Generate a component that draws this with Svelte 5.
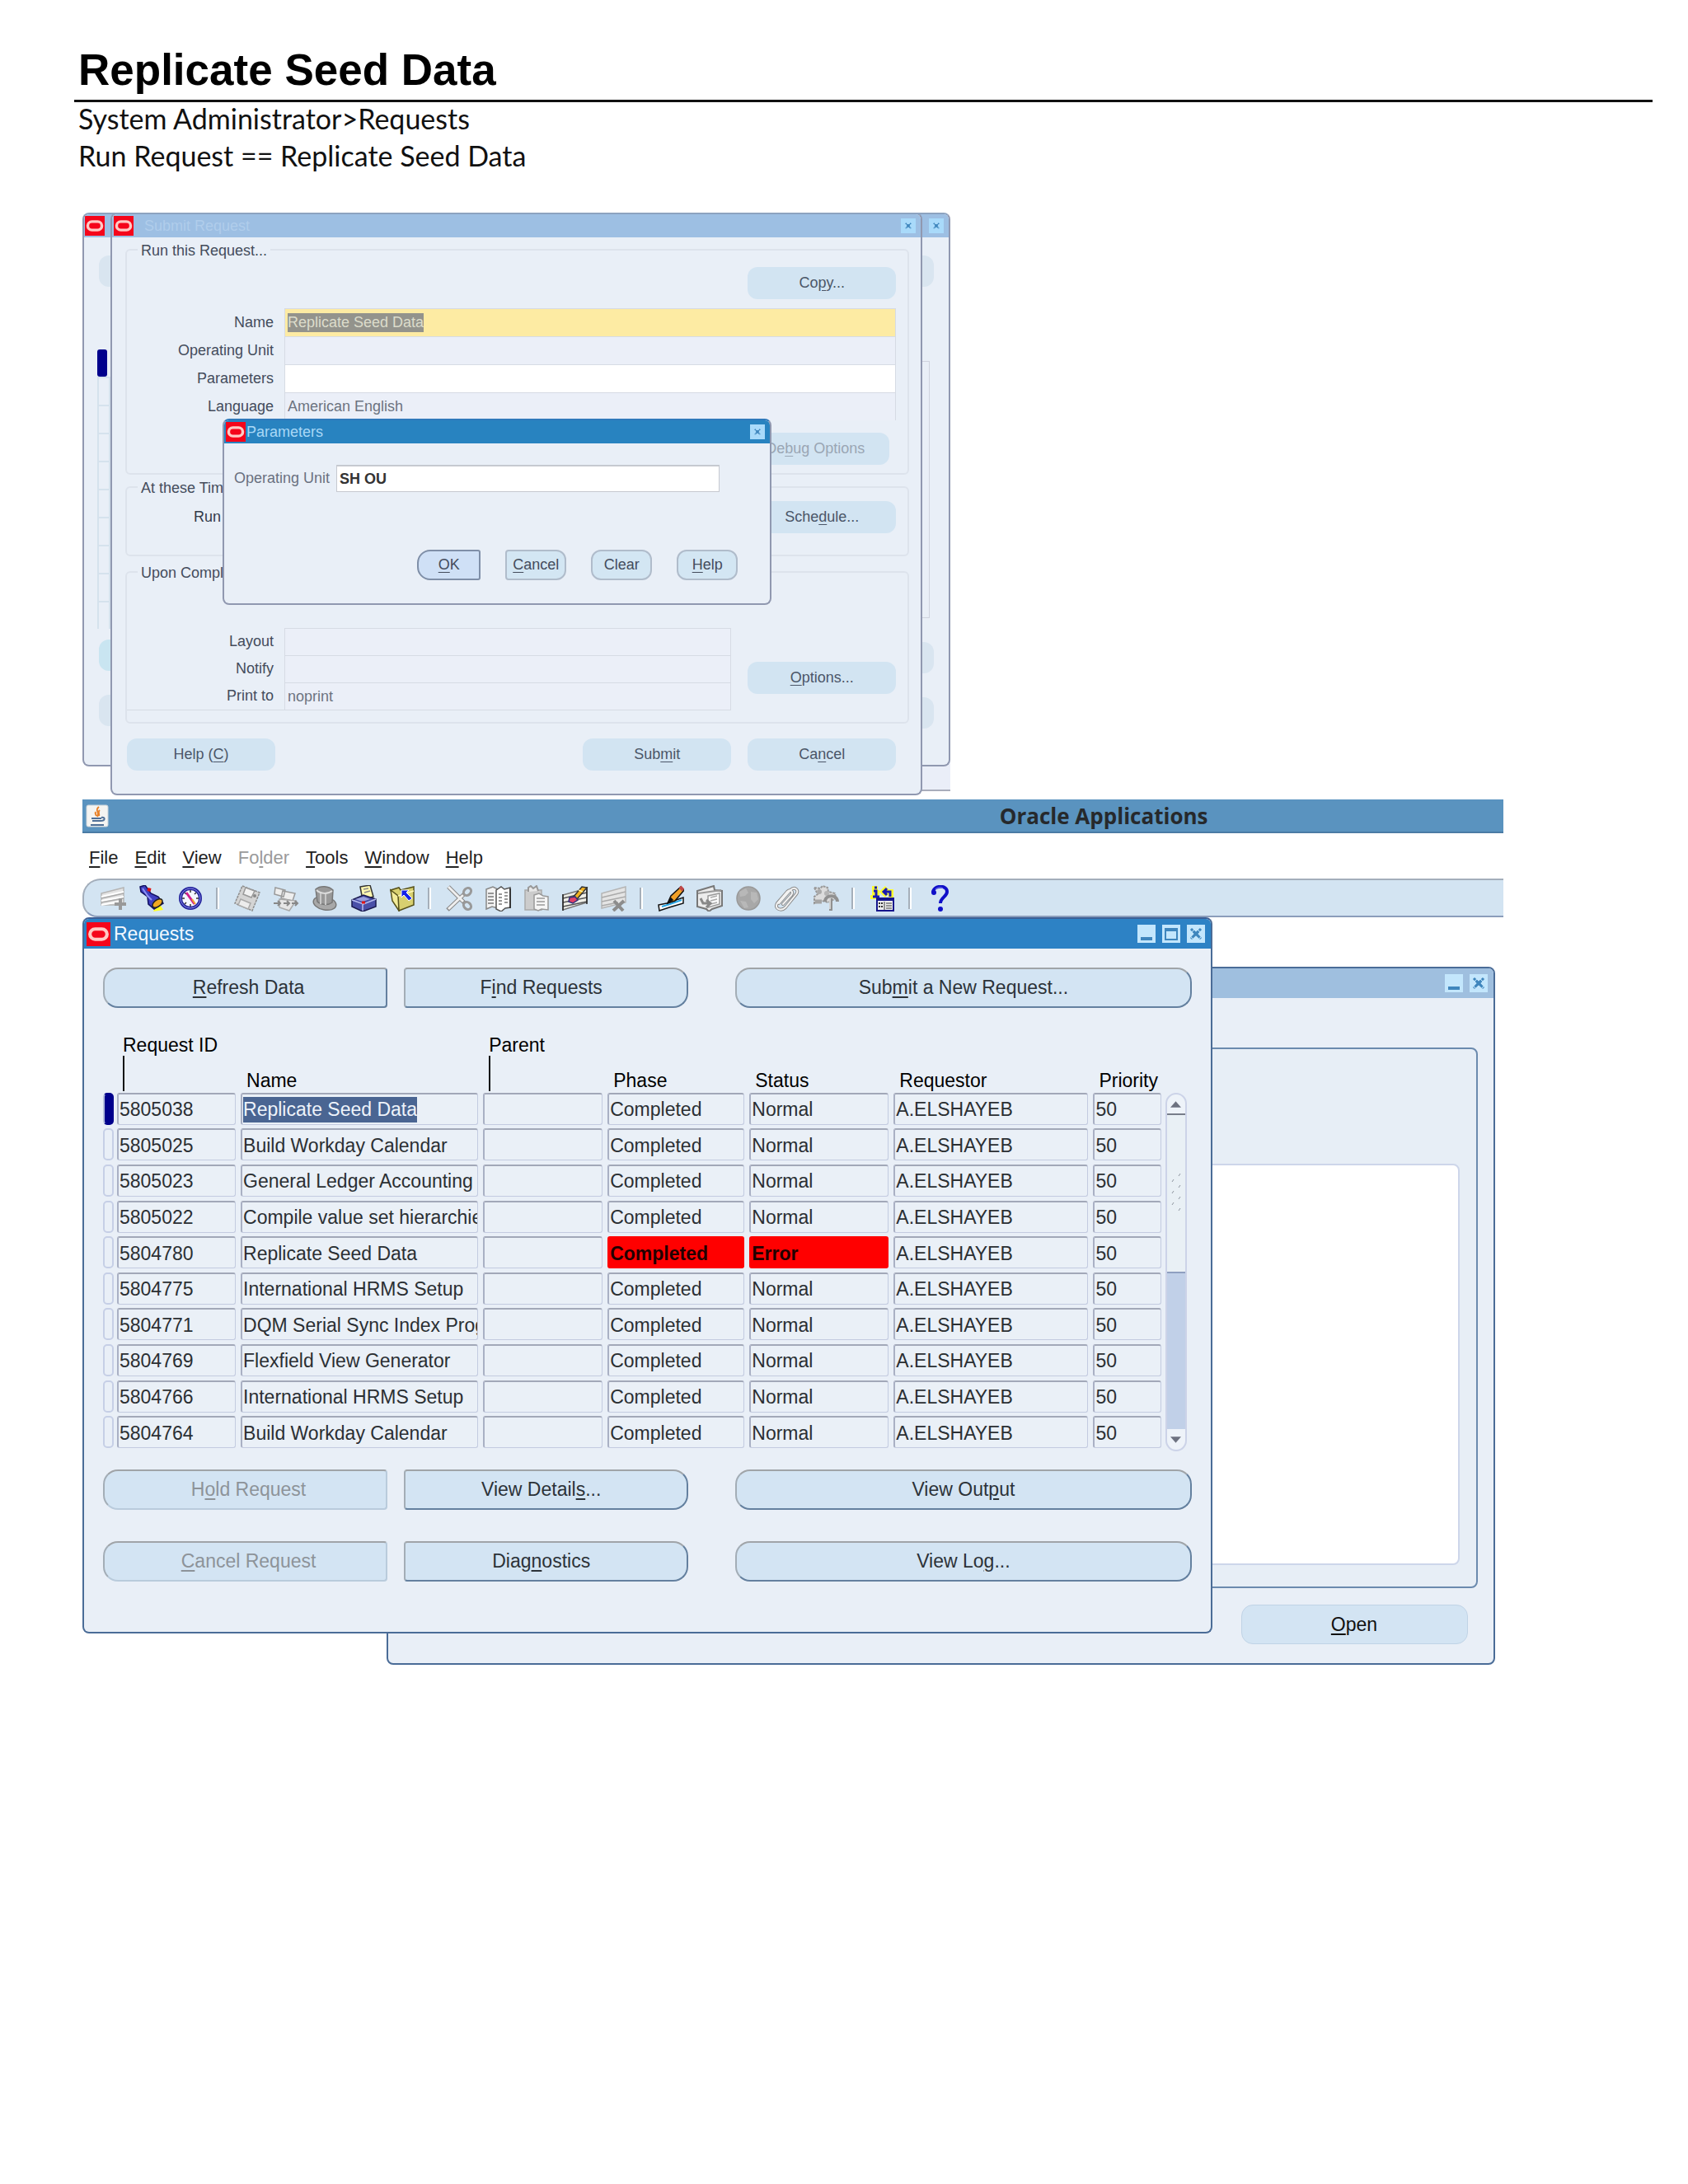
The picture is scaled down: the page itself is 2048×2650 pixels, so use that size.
<script>
  const requests = [
    ['5805038', 'Replicate Seed Data'],
    ['5805025', 'Build Workday Calendar'],
    ['5805023', 'General Ledger Accounting'],
    ['5805022', 'Compile value set hierarchies'],
    ['5804780', 'Replicate Seed Data', true],
    ['5804775', 'International HRMS Setup'],
    ['5804771', 'DQM Serial Sync Index Program'],
    ['5804769', 'Flexfield View Generator'],
    ['5804766', 'International HRMS Setup'],
    ['5804764', 'Build Workday Calendar']
  ].map(([id, name, failed = false]) => ({ id, name, failed }));

  const menus = ['_File', '_Edit', '_View', 'Fo_lder', '_Tools', '_Window', '_Help'];

  const tools = [
    'New', 'Find', 'Navigator', '|', 'Save', 'Next Step', 'Switch Responsibility', 'Print', 'Close Form', '|',
    'Cut', 'Copy', 'Paste', 'Clear Record', 'Delete', '|',
    'Edit Field', 'Zoom', 'Translations', 'Attachments', 'Folder Tools', '|', 'Window Help', '|', 'Help'
  ];
</script>

{#snippet mn(text)}
  {@const i = text.indexOf('_')}
  {#if i < 0}{text}{:else}<span>{text.slice(0, i)}<u>{text[i + 1]}</u>{text.slice(i + 2)}</span>{/if}
{/snippet}

{#snippet oracle()}
  <svg class="oracle" viewBox="0 0 28 28" aria-hidden="true">
    <rect width="28" height="28" fill="#f5051a" />
    <rect x="4" y="8" width="20" height="12" rx="6" fill="none" stroke="#ffc9c4" stroke-width="4" />
  </svg>
{/snippet}

{#snippet ctl(kind)}
  <button class="ctl" aria-label={kind}>
    <svg viewBox="0 0 22 22" fill="none" stroke="#3f86bd">
      {#if kind === 'Minimize'}<path d="M4 17h14" stroke-width="4" />
      {:else if kind === 'Maximize'}<path d="M4 5h14v13H4zM4 7h14" stroke-width="2" />
      {:else}<path d="M5 5l12 12M17 5L5 17" stroke-width="3" stroke-dasharray="3 1" /><path d="M8 8l6 6M14 8l-6 6" stroke-width="3" />{/if}
    </svg>
  </button>
{/snippet}

{#snippet toolIcon(name)}
  <svg viewBox="0 0 32 32" aria-hidden="true" fill="none" stroke-width="1.5">
    {#if name === 'New'}
      <path d="M2 10l27-7v21H2z" fill="#e4e4e4" stroke="#b5b5b5" /><path d="M2 14l27-6M2 19l27-5M2 24l22-4" stroke="#fff" stroke-width="2" /><path d="M2 16l27-6M2 21l27-5" stroke="#aaa" /><path d="M25 16v14M18 23h14" stroke="#999" stroke-width="4" />
    {:else if name === 'Find'}
      <path d="M24 20l6 10-12 2z" fill="#ffff28" /><path d="M2 2l6-2 7 10 9 4 6 8-11 7-7-6-1-9L3 8z" fill="#3f3fc0" stroke="#101060" /><path d="M5 4l6 9 5 5" stroke="#8d92f4" stroke-width="2" /><ellipse cx="23" cy="22" rx="7" ry="4" transform="rotate(-38 23 22)" fill="#f0a820" stroke="#222" /><path d="M11 5l4 1" stroke="#e01010" stroke-width="4" />
    {:else if name === 'Navigator'}
      <circle cx="16" cy="16" r="12" fill="#f4f6ff" stroke="#23239c" stroke-width="4" /><circle cx="16" cy="16" r="12" stroke="#8a8ae8" stroke-width="1" /><path d="M16 6v3M16 23v3M6 16h3M23 16h3M9 9l2 2M23 9l-2 2M9 23l2-2" stroke="#333" /><path d="M11 9l10 14" stroke="#d0208c" stroke-width="3" /><path d="M18 17l4 6" stroke="#f0a030" stroke-width="2" />
    {:else if name === 'Save'}
      <path d="M10 1l21 8-9 22-21-9z" fill="#d4d4d4" stroke="#8d8d8d" stroke-dasharray="3 1" /><path d="M14 3l11 4-4 8-10-4z" fill="#f2f2f2" stroke="#999" /><path d="M8 17l12 5-3 7-12-5z" fill="#ececec" stroke="#aaa" /><circle cx="25" cy="13" r="2" fill="#888" />
    {:else if name === 'Next Step'}
      <path d="M3 3l12 3-2 8-11-3zM12 7l15 3-3 9-14-3z" fill="#eee" stroke="#999" /><path d="M8 17l20 2-8 12-12-4z" fill="#e6e6e6" stroke="#aaa" /><path d="M1 22h8M13 22h7M23 22h7M6 19l3 3-3 3M17 19l3 3-3 3M27 19l3 3-3 3" stroke="#888" stroke-width="2" />
    {:else if name === 'Switch Responsibility'}
      <ellipse cx="16" cy="22" rx="14" ry="8" transform="rotate(12 16 22)" fill="#a8a8a8" stroke="#777" /><path d="M5 5c6-5 16-4 21 1l-1 15c-5 4-14 3-18-1z" fill="#999" stroke="#777" /><path d="M6 6c5 5 14 5 19 1" stroke="#ddd" stroke-width="2" /><path d="M11 10v13M17 11v13" stroke="#c8c8c8" stroke-width="2" />
    {:else if name === 'Print'}
      <path d="M12 2l12-2 4 14-13 4z" fill="#fff8b0" stroke="#333" /><path d="M16 5l6-1M17 9l7-2" stroke="#888" /><path d="M2 18l14-6 15 5v9l-16 6-13-6z" fill="#4a50a8" stroke="#1b1b50" /><path d="M2 18l14 5 15-6M15 23v8" stroke="#b8bdf0" /><path d="M6 17l10-3 8 3-9 3z" fill="#9aa0dd" /><path d="M14 21h4" stroke="#e01515" stroke-width="3" />
    {:else if name === 'Close Form'}
      <path d="M2 6l10-3 2 3 16-4v22L12 31z" fill="#d8d070" stroke="#55501a" /><path d="M2 6l9 7 1 18L4 19z" fill="#f3ec9a" stroke="#55501a" /><path d="M11 13l19-6" stroke="#fff8b8" /><path d="M15 6h9l-3 3 7 7-4 3-6-7-3 3z" fill="#1522e8" stroke="#fff" stroke-width="1" />
    {:else if name === 'Cut'}
      <path d="M3 2l20 20M2 30l20-19" stroke="#888" stroke-width="5" /><path d="M3 2l18 18M3 29l18-17" stroke="#efefef" stroke-width="3" /><ellipse cx="26" cy="8" rx="5" ry="4" transform="rotate(-45 26 8)" stroke="#999" stroke-width="3" /><ellipse cx="26" cy="25" rx="5" ry="4" transform="rotate(45 26 25)" stroke="#999" stroke-width="3" />
    {:else if name === 'Copy'}
      <path d="M2 5l8-3 6 3v23l-7-2-7 3z" fill="#f3f3f3" stroke="#888" /><path d="M14 6l6-4 4 3 7-2v24l-6 1-5 4-6-3z" fill="#fff" stroke="#555" /><path d="M4 10h7M4 14h7M4 18h7M4 22h7M17 11h4M24 9h4M17 15h4M24 13h4M17 19h4M24 17h4M17 23h4M24 21h4" stroke="#777" /><path d="M31 4v24" stroke="#222" />
    {:else if name === 'Paste'}
      <path d="M2 6h20v24H2z" fill="#ccc" stroke="#aaa" /><path d="M6 8V3l3-2 3 3 4-3 2 6" fill="#e8e8e8" stroke="#999" stroke-width="2" /><path d="M13 12l6-2 5 3 6 1v16l-8-1-4 2-5-2z" fill="#f6f6f6" stroke="#999" /><path d="M16 16h10M16 20h10M16 24h10" stroke="#999" />
    {:else if name === 'Clear Record'}
      <path d="M1 12l29-8v17L1 30z" fill="#efefe8" stroke="#777" /><path d="M1 16l29-7M1 21l29-6M1 26l29-6" stroke="#555" /><path d="M1 11v20M30 2v21" stroke="#222" /><path d="M13 15L24 2l6 1-12 14z" fill="#f0b020" stroke="#333" /><path d="M20 6l5 2" stroke="#fff0a0" /><path d="M9 15l7-1 3 4-6 4-5-2z" fill="#e04068" stroke="#30307a" />
    {:else if name === 'Delete'}
      <path d="M1 10l29-8v19L1 28z" fill="#e4e4e4" stroke="#b5b5b5" /><path d="M1 15l29-7M1 20l29-6M1 25l20-4" stroke="#aaa" /><path d="M16 19l11 12M28 19L15 31" stroke="#8c8c8c" stroke-width="4" />
    {:else if name === 'Edit Field'}
      <path d="M1 24l10-2 20-7v7L14 27 2 31z" fill="#fff" stroke="#111" /><path d="M5 26l10-3 14-5" stroke="#28a8e8" stroke-width="2" /><path d="M12 22l4-9L28 2l4 4-11 13z" fill="#f0a028" stroke="#111" /><path d="M27 2l4 4" stroke="#c04848" stroke-width="4" /><path d="M12 22l4-6 2 2z" fill="#111" stroke="#111" />
    {:else if name === 'Zoom'}
      <path d="M1 7l20-6 1 5 9 1v18l-12 4-4 3-3-3-11-3z" fill="#ececec" stroke="#777" stroke-width="2" /><path d="M2 10l28-4" stroke="#999" stroke-width="2" /><path d="M14 13l14-3v13l-14 4z" stroke="#999" fill="#fafafa" /><path d="M17 15l8-2M17 19l8-2M17 23l8-2" stroke="#aaa" /><path d="M5 16l3 6h8M12 18l5 4-5 5" stroke="#888" stroke-width="3" />
    {:else if name === 'Translations'}
      <circle cx="16" cy="16" r="14" fill="#a8a8a8" stroke="#999" /><path d="M5 8l8-4 3 5-4 4-6 1zM19 8l7 1 2 8-5 5-4-5zM6 19l7 1 3 7-5 1z" fill="#b8b8b8" />
    {:else if name === 'Attachments'}
      <g stroke-linecap="round"><path d="M6 22L20 6c5-5 11 0 7 5L14 27c-5 5-14 2-10-5L16 8c4-4 8 0 5 4L11 23" stroke="#8c8c8c" stroke-width="4" /><path d="M6 22L20 6c5-5 11 0 7 5L14 27c-5 5-14 2-10-5L16 8c4-4 8 0 5 4L11 23" stroke="#f2f2f2" stroke-width="2" /></g>
    {:else if name === 'Folder Tools'}
      <path d="M2 3l7 1 3-3 6 2 1 5 8 2 1 6-9 5-8-2-9 3V14l4-3z" fill="#dcdcdc" stroke="#999" stroke-dasharray="3 1" stroke-width="2" /><circle cx="8" cy="8" r="3" fill="#aaa" /><circle cx="17" cy="10" r="3" fill="#b5b5b5" /><path d="M3 20h8" stroke="#a5a5a5" stroke-width="5" /><path d="M15 20c0-9 15-9 15 0M22 16v15" stroke="#909090" stroke-width="4" /><path d="M21 16v13" stroke="#e8e8e8" />
    {:else if name === 'Window Help'}
      <path d="M3 1h7v5h2v11H1v-5h2z" fill="#ffff30" /><path d="M6 3h3M5 7h3v7M4 14h8" stroke="#1a1ab0" stroke-width="3" /><path d="M16 8h10v7M21 3l-5 5 5 5" stroke="#ffff30" stroke-width="6" /><path d="M17 8h8v6M21 4l-4 4 4 4" stroke="#1a1ab0" stroke-width="3" /><path d="M9 16h20v15H9z" fill="#eee" stroke="#15158c" stroke-width="2" /><path d="M9 17h20" stroke="#15158c" stroke-width="4" /><path d="M11 22h5M11 26h5" stroke="#333" stroke-width="2" stroke-dasharray="2 1" /><path d="M18 20v10M20 22h7M20 25h7M20 28h7" stroke="#777" />
    {:else}
      <path d="M8 9c0-9 17-10 17-1 0 6-8 7-8 14" stroke="#1010c8" stroke-width="4" /><circle cx="9" cy="9" r="3" fill="#1010c8" /><circle cx="17" cy="29" r="3" fill="#1010c8" /><path d="M11 5c3-3 8-3 10 0" stroke="#7a7af0" stroke-width="1" />
    {/if}
  </svg>
{/snippet}

<main>
  <header>
    <h1>Replicate Seed Data</h1>
    <p>System Administrator&gt;Requests</p>
    <p>Run Request == Replicate Seed Data</p>
  </header>

  <div class="submit-shot stack">
    <div class="sheet"></div>

    <div class="win soft behind">
      <div class="bar pale">{@render oracle()}{@render ctl('Close')}</div>
      <div class="edges">
        <div class="edge left">
          <i class="nub"></i><i class="current"></i>
          {#each Array(9) as _}<i class="slot"></i>{/each}
          <i class="nub teal"></i><i class="nub"></i>
        </div>
        <div class="edge right">
          <i class="nub"></i><i class="rail"></i><i class="nub"></i><i class="nub last"></i>
        </div>
      </div>
    </div>

    <section class="win soft submit">
      <div class="bar pale">{@render oracle()}<span>Submit Request</span>{@render ctl('Close')}</div>
      <div class="submit-body">
        <fieldset class="run">
          <legend>Run this Request...</legend>
          <div class="right"><button class="pill">{@render mn('Co_py...')}</button></div>
          <label class="row"><span>Name</span><div class="field yellow"><input class="picked" readonly value="Replicate Seed Data" size="19" /></div></label>
          <label class="row"><span>Operating Unit</span><input class="field" readonly /></label>
          <label class="row"><span>Parameters</span><input class="field white" /></label>
          <label class="row"><span>Language</span><input class="field" readonly value="American English" /></label>
          <div class="right debug"><button class="pill" disabled>{@render mn('De_bug Options')}</button></div>
        </fieldset>
        <fieldset class="times">
          <legend>At these Times...</legend>
          <div class="line"><span class="job">Run the Job</span><button class="pill">{@render mn('Sche_dule...')}</button></div>
        </fieldset>
        <fieldset class="upon">
          <legend>Upon Completion...</legend>
          <div class="line end">
            <div class="rows">
              <label class="row"><span>Layout</span><input class="field" readonly /></label>
              <label class="row"><span>Notify</span><input class="field" readonly /></label>
              <label class="row"><span>Print to</span><input class="field" readonly value="noprint" /></label>
            </div>
            <button class="pill options">{@render mn('_Options...')}</button>
          </div>
        </fieldset>
        <div class="actions">
          <button class="pill help">{@render mn('Help (_C)')}</button>
          <button class="pill">{@render mn('Sub_mit')}</button>
          <button class="pill">{@render mn('Ca_ncel')}</button>
        </div>
      </div>
    </section>

    <section class="win soft dialog">
      <div class="bar">{@render oracle()}<span>Parameters</span>{@render ctl('Close')}</div>
      <label class="ask"><span>Operating Unit</span><input value="SH OU" /></label>
      <div class="dialog-actions">
        <button class="ok">{@render mn('_OK')}</button>
        <button class="half">{@render mn('_Cancel')}</button>
        <button>Clear</button>
        <button>{@render mn('_Help')}</button>
      </div>
    </section>
  </div>

  <div class="app">
    <div class="app-title">
      <svg viewBox="0 0 28 28" aria-hidden="true" fill="none">
        <rect x="1" y="1" width="26" height="26" rx="2" fill="#f4f4f2" stroke="#c9d3da" />
        <path d="M16 3c-6 5 2 6-2 12M17 7c-3 2 0 4-1 7M12 9c-1 2 0 3 1 5" stroke="#e8822a" stroke-width="2" />
        <path d="M7 17h12M8 20h10M6 25h16M19 16c5-1 5 4-1 4" stroke="#4e6f97" stroke-width="2" />
      </svg>
      <span>Oracle Applications</span>
    </div>
    <nav>
      {#each menus as m}<button disabled={m === 'Fo_lder'}>{@render mn(m)}</button>{/each}
    </nav>
    <div class="toolbar">
      {#each tools as t}
        {#if t === '|'}<i></i>{:else}<button aria-label={t}>{@render toolIcon(t)}</button>{/if}
      {/each}
    </div>

    <div class="stack">
      <section class="win navigator">
        <div class="bar pale">{@render ctl('Minimize')}{@render ctl('Close')}</div>
        <div class="panel"><div class="list"></div></div>
        <button class="open">{@render mn('_Open')}</button>
      </section>

      <section class="win requests">
        <div class="bar">{@render oracle()}<span>Requests</span>{@render ctl('Minimize')}{@render ctl('Maximize')}{@render ctl('Close')}</div>
        <div class="requests-body">
          <div class="buttons">
            <button class="l">{@render mn('_Refresh Data')}</button>
            <button class="r">{@render mn('F_ind Requests')}</button>
            <button class="wide">{@render mn('Sub_mit a New Request...')}</button>
          </div>
          <div class="grid">
            <table>
              <colgroup>
                <col class="c0" /><col class="c1" /><col class="c2" /><col class="c3" /><col class="c4" /><col class="c5" /><col class="c6" /><col class="c7" />
              </colgroup>
              <thead>
                <tr>
                  <td></td>
                  <th class="tick">Request ID</th><th>Name</th><th class="tick">Parent</th><th>Phase</th><th>Status</th><th>Requestor</th><th>Priority</th>
                </tr>
              </thead>
              <tbody>
                {#each requests as r, i}
                  <tr>
                    <td class="mark"><i class:on={i === 0}></i></td>
                    <td><div><input readonly aria-label="Request ID" value={r.id} /></div></td>
                    <td><div><input readonly aria-label="Name" class:picked={i === 0} value={r.name} /></div></td>
                    <td><div><input readonly aria-label="Parent" /></div></td>
                    <td><div class:failed={r.failed}><input readonly aria-label="Phase" value="Completed" /></div></td>
                    <td><div class:failed={r.failed}><input readonly aria-label="Status" value={r.failed ? 'Error' : 'Normal'} /></div></td>
                    <td><div><input readonly aria-label="Requestor" value="A.ELSHAYEB" /></div></td>
                    <td><div><input readonly aria-label="Priority" value="50" /></div></td>
                  </tr>
                {/each}
              </tbody>
            </table>
            <div class="scroll">
              <button class="up" aria-label="Scroll up"><svg viewBox="0 0 14 8"><path d="M0 8L7 0l7 8z" fill="#6d7280" /></svg></button>
              <div class="thumb">
                <svg viewBox="0 0 14 50" stroke="#8f96a0" stroke-width="1"><path d="M10 4l2-3M10 18l2-3M10 32l2-3M10 46l2-3M2 11l2-3M2 25l2-3M2 39l2-3" /></svg>
              </div>
              <div class="trough"></div>
              <button class="down" aria-label="Scroll down"><svg viewBox="0 0 14 8"><path d="M0 0h14L7 8z" fill="#6d7280" /></svg></button>
            </div>
          </div>
          <div class="buttons low">
            <button class="l" disabled>{@render mn('H_old Request')}</button>
            <button class="r">{@render mn('View Detail_s...')}</button>
            <button class="wide">{@render mn('View Out_put')}</button>
            <button class="l" disabled>{@render mn('_Cancel Request')}</button>
            <button class="r">{@render mn('Diag_nostics')}</button>
            <button class="wide">{@render mn('View Lo_g...')}</button>
          </div>
        </div>
      </section>
    </div>
  </div>
</main>

<style>
  :global(body) { background: #fff; }
  main { box-sizing: border-box; padding: 55px 43px 60px 90px; font-family: "Liberation Sans", Arial, sans-serif; color: #111; }
  main * { box-sizing: border-box; }
  button, input { font: inherit; color: inherit; margin: 0; padding: 0; border: 0; background: none; border-radius: 0; outline: none; white-space: nowrap; }
  u { text-decoration: underline; text-underline-offset: 3px; }
  i { display: block; }

  h1 { margin: 0 0 -3px; padding: 0 5px 6px; font-size: 53px; line-height: 60px; border-bottom: 3px solid #111; color: #000; }
  header p { margin: 0 5px; font-family: Lato, "Open Sans", sans-serif; font-size: 34px; line-height: 45px; color: #111; }

  .stack { display: grid; }
  .stack > * { grid-area: 1 / 1; min-width: 0; }

  .win { display: flex; flex-direction: column; background: #e9eff7; border: 2px solid #4a6c97; border-radius: 8px; overflow: hidden; }
  .bar { display: flex; align-items: center; gap: 8px; height: 36px; padding: 0 7px 0 3px; background: #2d82c5; color: #f2f8ff; font-size: 23px; flex: none; }
  .bar.pale { background: #9fbfdf; }
  .bar span { margin-left: -4px; margin-right: auto; }
  .oracle { width: 29px; height: 29px; flex: none; }
  .ctl { width: 22px; height: 22px; background: #c3e6fc; flex: none; }
  .ctl svg { display: block; width: 100%; height: 100%; }

  /* Submit Request windows */
  .submit-shot { width: 55%; margin: 47px 0 5px 10px; font-size: 18px; color: #444c5c; }
  .soft { border-color: #9098b0; }
  .soft .bar { height: 28px; font-size: 18px; gap: 5px; background: #2883c0; color: #a9d8f6; padding: 0 6px 0 2px; }
  .soft .bar.pale { background: #9dbfe3; color: #b0cdeb; }
  .soft .bar.pale span { margin-left: 8px; }
  .soft .bar .ctl { width: 18px; height: 18px; background: #a9dafa; margin-left: auto; }
  .soft .ctl svg { padding: 3px; }
  .soft .oracle { width: 24px; height: 24px; }
  .sheet { margin: 600px 0 5px 40px; background: #eaeef8; border-bottom: 2px solid #a9adbb; }
  .behind { margin-bottom: 35px; border-top-color: #8da3c0; }
  .behind .bar.pale { padding-left: 1px; }
  .edges { display: flex; justify-content: space-between; }
  .edge { width: 32px; padding-top: 22px; }
  .edge.right { display: block; width: 33px; }
  .nub { height: 38px; border-radius: 12px 0 0 12px; background: #d9e5f0; margin-left: 18px; }
  .right .nub { border-radius: 0 12px 12px 0; margin: 0 18px 0 0; }
  .current { width: 12px; height: 33px; border-radius: 3px; background: #00008c; margin: 76px 0 0 16px; }
  .slot { height: 34px; border: 2px solid #d5e2ed; border-bottom: 0; margin-left: 16px; }
  .nub.teal { background: #c9e5f1; margin-top: 13px; margin-bottom: 29px; }
  .rail { height: 312px; width: 10px; margin: 90px 0 29px 0; border: 1px solid #cfd3de; border-left: 0; }
  .right .nub.last { margin-top: 29px; }

  .submit { margin: 0 34px; border-top-color: #8da3c0; }
  .submit-body { padding: 14px 14px 27px 16px; }
  fieldset { margin: 0; min-width: 0; padding: 0 14px 0 0; border: 2px solid #dde3ec; border-radius: 6px; }
  legend { float: left; padding: 0 4px; margin: -10px 0 0 13px; line-height: 20px; background: #e9eff7; }
  legend + div { clear: both; }
  .right, .line { display: flex; justify-content: flex-end; }
  .pill { width: 180px; height: 39px; border-radius: 12px; background: #d2e4f2; color: #4b5668; flex: none; }
  .pill:disabled { color: #9aa6b4; }
  .run { padding-bottom: 10px; }
  .run .right:not(.debug) { padding: 10px 0 11px; }
  .run .row, .run .field { height: 34px; }
  .run .debug { padding: 15px 8px 0 0; }
  .row { display: flex; align-items: center; height: 33px; }
  .row > span { width: 178px; text-align: right; margin-right: 13px; flex: none; }
  .field { flex: 1; min-width: 0; height: 33px; padding: 0 3px; border: 1px solid #d6dbe4; border-bottom-width: 0; background: #ebeff8; color: #6c7380; }
  .field.white { background: #fff; }
  .field.yellow { display: flex; align-items: center; background: #fdeba3; }
  .picked { field-sizing: content; }
  .yellow .picked { background: #93938c; color: #dcdccb; height: 23px; }
  .times { margin-top: 14px; padding-bottom: 26px; }
  .times .line { align-items: center; padding-top: 6px; }
  .job { margin: 0 auto 0 81px; color: #333b4a; }
  .upon { margin-top: 18px; padding-bottom: 14px; }
  .upon .line { padding-top: 57px; align-items: flex-end; gap: 20px; }
  .rows { flex: 1; border-bottom: 1px solid #d6dbe4; }
  .options { margin-bottom: 20px; }
  .actions { display: flex; gap: 20px; padding: 18px 16px 0 2px; }
  .help { margin-right: auto; }

  .dialog { margin: 250px 217px 231px 170px; border-top-color: #2f79bb; }
  .dialog .bar span { margin-left: -4px; }
  .ask { display: flex; align-items: center; justify-content: space-between; padding: 26px 61px 0 12px; color: #6a7180; }
  .ask span { width: 124px; flex: none; }
  .ask input { flex: 1; min-width: 0; height: 33px; padding: 0 3px; background: #fff; border: 1px solid #c6c9d0; border-top-width: 2px; font-weight: bold; color: #333; }
  .dialog-actions { display: flex; justify-content: flex-end; gap: 30px; padding: 70px 39px 28px; }
  .dialog-actions button { width: 74px; height: 37px; background: #d3e6f3; border: 2px solid #b0bccb; border-radius: 12px; }
  .dialog-actions .half { border-radius: 4px 12px 12px 4px; }
  .dialog-actions .ok { width: 77px; border-color: #7f8fa8; border-radius: 16px 3px 3px 16px; background: #cfe0f6; }

  /* Oracle Applications */
  .app { width: 90%; margin-left: 10px; font-size: 23px; }
  .app-title { display: flex; align-items: center; height: 41px; padding: 0 4px; background: #5a93bf; border-bottom: 2px solid #4a7ba4; }
  .app-title svg { width: 28px; height: 28px; flex: none; }
  .app-title span { margin-left: 63%; font: bold 26px/36px "Open Sans", "Noto Sans", sans-serif; color: #26292c; white-space: nowrap; }
  nav { display: flex; align-items: center; gap: 20px; height: 55px; padding: 4px 8px 0; font-size: 22px; }
  nav button { color: #222; }
  nav button:disabled { color: #9a9a9a; }
  .toolbar { display: flex; align-items: center; height: 47px; gap: 15px; padding-left: 19px; background: #d3e4f2; border: 2px solid #a3aebb; border-right: 0; border-radius: 22px 0 0 18px; border-bottom-color: #8b9dbb; }
  .toolbar button, .toolbar svg { display: block; width: 32px; height: 32px; }
  .toolbar i { width: 4px; height: 26px; margin-right: 3px; border-left: 2px solid #a5afba; border-right: 2px solid #fff; }

  .navigator { margin: 60px 10px 0 369px; }
  .navigator .bar { justify-content: flex-end; }
  .panel { flex: 1; display: flex; margin: 60px 19px 0; padding: 139px 20px 26px; border: 2px solid #6b8aae; border-radius: 8px; background: #e7eef6; }
  .list { flex: 1; background: #fff; border: 2px solid #cdd6ea; border-radius: 8px; }
  .open { align-self: flex-end; width: 275px; height: 48px; margin: 20px 31px 23px; background: #d3e4f3; border: 1px solid #c0d3e6; border-radius: 14px; }

  .requests { margin: 0 353px 38px 0; border-top-color: #3c5f96; }
  .requests .bar span { margin-left: -4px; }
  .requests-body { padding: 23px 23px 61px; }
  .buttons { display: grid; grid-template-columns: 345fr 345fr 590fr; gap: 38px 20px; }
  .buttons button { height: 49px; background: #d3e4f3; border: 2px solid #64809f; border-top-color: #a0a4a8; border-left-color: #a3adb6; color: #2c3238; }
  .buttons button:disabled { color: #8d9399; border-color: #a0a4a8 #b9cbdc #b9cbdc #a3adb6; }
  .buttons .l { border-radius: 18px 4px 4px 18px; padding-left: 8px; }
  .buttons .r { border-radius: 4px 18px 18px 4px; padding-right: 12px; }
  .buttons .wide { border-radius: 18px; margin-left: 37px; }
  .low { padding-top: 22px; }
  .grid { display: flex; align-items: flex-end; gap: 5px; padding-right: 6px; }
  table { flex: 1; min-width: 0; height: 538px; table-layout: fixed; border-collapse: collapse; }
  .c0 { width: 17px; } .c1 { width: 150px; } .c2 { width: 294px; } .c3 { width: 151px; }
  .c4 { width: 172px; } .c5 { width: 175px; } .c6 { width: 242px; } .c7 { width: 82px; }
  thead tr { height: 102px; }
  th { vertical-align: bottom; text-align: left; font-weight: normal; line-height: 26px; padding: 0 0 1px 7px; white-space: nowrap; color: #000; }
  th.tick::after { content: ''; display: block; width: 2px; height: 43px; background: #111; }
  td { padding: 0 6px 3px 0; }
  td:last-child { padding-right: 0; }
  thead td { padding: 0; }
  td div { display: flex; align-items: center; height: 39px; padding: 2px 0 0 1px; border: 1px solid #c3cbe0; border-top: 2px solid #a2a8b8; border-left: 2px solid #a9b0c4; border-radius: 3px; background: #eaf0f7; overflow: hidden; }
  td input { width: 100%; height: 31px; color: #2b2f33; }
  td .picked { width: auto; background: #4a6592; color: #eef3fa; }
  td .failed { background: #f00; border-color: #f00; }
  .failed input { font-weight: bold; color: #200; }
  td.mark { padding-right: 4px; }
  .mark i { height: 39px; border: 2px solid #c6cfe6; border-radius: 5px; }
  .mark .on { background: #00008c; border-color: #00008c; border-left-color: #b4bede; }
  .scroll { display: flex; flex-direction: column; width: 26px; height: 435px; border: 2px solid #ccd3e8; border-radius: 13px; background: #eef3f9; overflow: hidden; flex: none; }
  .scroll button { display: grid; place-items: center; height: 25px; }
  .scroll button svg { width: 13px; height: 8px; }
  .up { border-bottom: 2px solid #777d8a; }
  .thumb { flex: 190; display: grid; place-items: center; background: #e9f0f5; border-bottom: 2px solid #8f9fc0; }
  .thumb svg { width: 14px; height: 54px; }
  .trough { flex: 190; background: #c1d0e8; }
</style>
